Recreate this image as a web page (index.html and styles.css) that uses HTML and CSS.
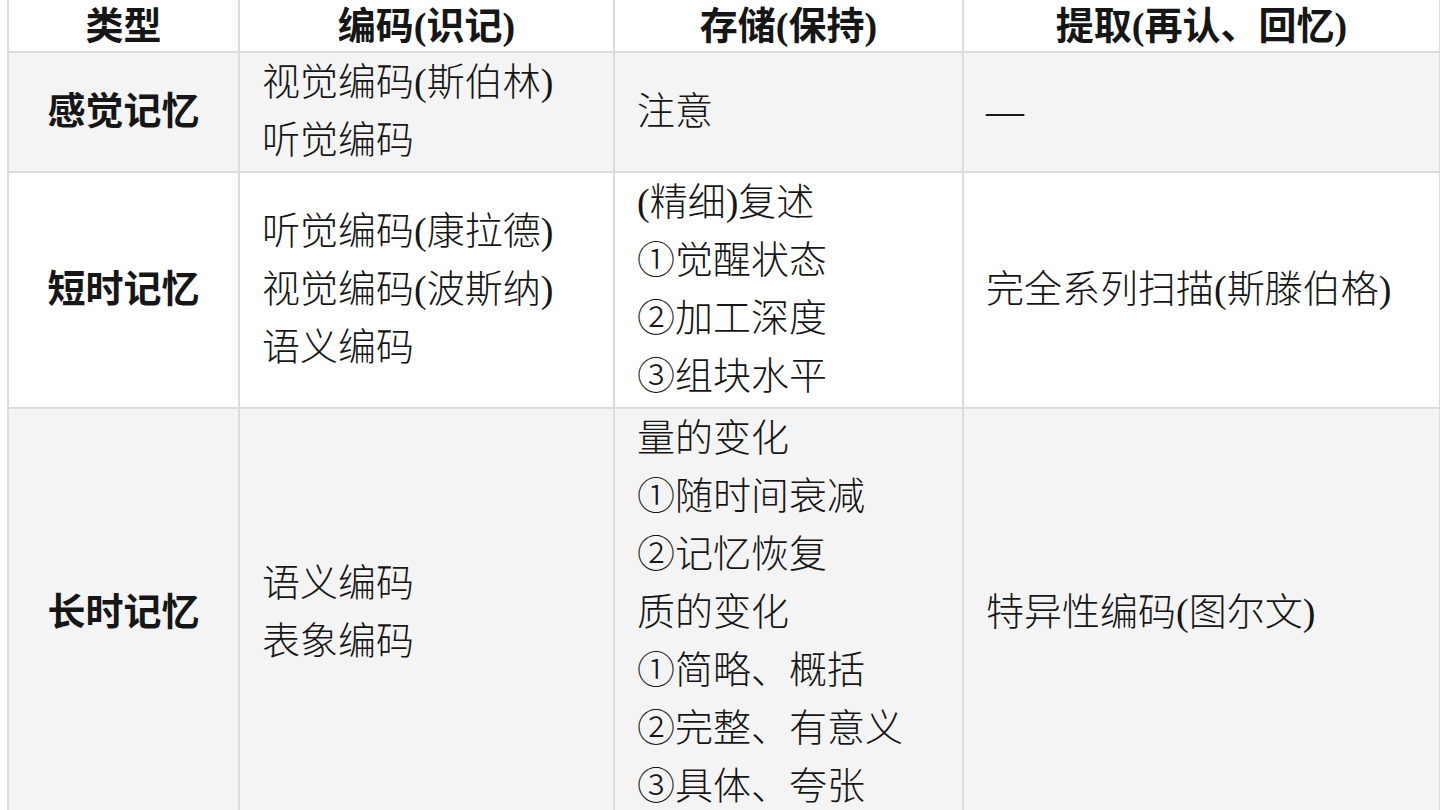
FILE: index.html
```html
<!DOCTYPE html>
<html lang="zh-CN">
<head>
<meta charset="utf-8">
<title>记忆类型</title>
<link rel="stylesheet" href="styles.css">
</head>
<body>
<table class="memory-table">
  <colgroup>
    <col class="col-type">
    <col class="col-encode">
    <col class="col-store">
    <col class="col-retrieve">
  </colgroup>
  <thead>
    <tr class="head-row">
      <th>类型</th>
      <th>编码(识记)</th>
      <th>存储(保持)</th>
      <th>提取(再认、回忆)</th>
    </tr>
  </thead>
  <tbody>
    <tr class="row-shaded">
      <th class="type-cell">感觉记忆</th>
      <td>视觉编码(斯伯林)<br>听觉编码</td>
      <td>注意</td>
      <td>—</td>
    </tr>
    <tr class="row-plain">
      <th class="type-cell">短时记忆</th>
      <td>听觉编码(康拉德)<br>视觉编码(波斯纳)<br>语义编码</td>
      <td>(精细)复述<br>①觉醒状态<br>②加工深度<br>③组块水平</td>
      <td>完全系列扫描(斯滕伯格)</td>
    </tr>
    <tr class="row-shaded">
      <th class="type-cell">长时记忆</th>
      <td>语义编码<br>表象编码</td>
      <td>量的变化<br>①随时间衰减<br>②记忆恢复<br>质的变化<br>①简略、概括<br>②完整、有意义<br>③具体、夸张</td>
      <td>特异性编码(图尔文)</td>
    </tr>
  </tbody>
</table>
</body>
</html>
```
FILE: styles.css
```css
html, body {
  margin: 0;
  padding: 0;
  background: #ffffff;
}

body {
  overflow: hidden;
  font-family: "Liberation Serif", "Noto Sans CJK SC", serif;
  color: #161616;
}

.memory-table {
  border-collapse: collapse;
  table-layout: fixed;
  width: 1432px;
  margin: -2px 0 0 7px;
  font-size: 38px;
  line-height: 58px;
  font-weight: 300;
}

.col-type { width: 231px; }
.col-encode { width: 375px; }
.col-store { width: 349px; }
.col-retrieve { width: 477px; }

.memory-table th,
.memory-table td {
  border: 2px solid #dcdcdc;
  padding: 0 22px 2px;
  vertical-align: middle;
  text-align: left;
  font-weight: 300;
  white-space: nowrap;
}

.head-row th {
  background: #ffffff;
  text-align: center;
  font-weight: 700;
  line-height: 50px;
  padding: 1px 10px 0;
}

.memory-table .type-cell {
  text-align: center;
  font-weight: 700;
  padding: 0 10px 2px;
}

.row-shaded th,
.row-shaded td {
  background: #f4f4f4;
}

.row-plain th,
.row-plain td {
  background: #ffffff;
}
```
